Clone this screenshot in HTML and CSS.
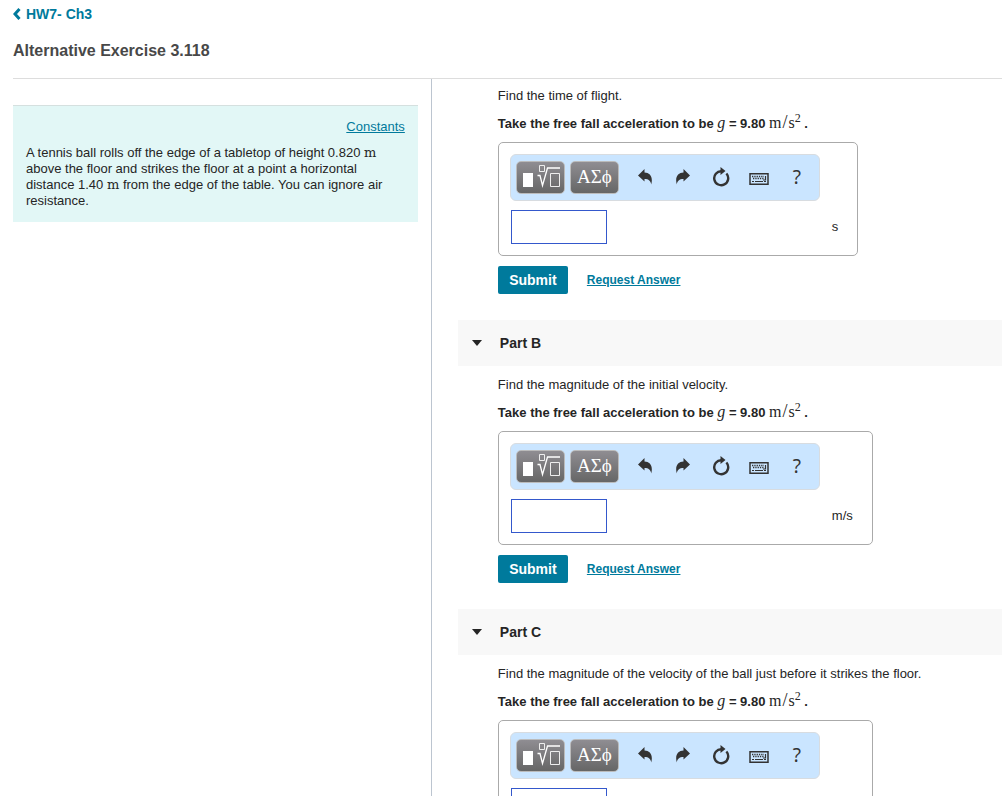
FILE: index.html
```html
<!DOCTYPE html>
<html lang="en">
<head>
    <meta charset="UTF-8">
    <meta name="viewport" content="width=device-width, initial-scale=1.0">
    <title>Alternative Exercise 3.118</title>
    <link rel="stylesheet" href="styles.css">
</head>
<body>
    <!-- icons shared by the three toolbars -->
    <svg class="sprite" aria-hidden="true">
        <symbol id="icon-template" viewBox="0 0 40 26">
            <path d="M3 9h10v14H3z" fill="#fff"/>
            <path d="M19.500 1.500h5v6h-5zM30.500 9.500h9v13h-9z" fill="none" stroke="#eee"/>
            <path d="M17.500 11.500h2.500l2.500 10 5-17.500H40" fill="none" stroke="#fff" stroke-width="1.300"/>
        </symbol>
        <symbol id="icon-undo" viewBox="0 0 16 16">
            <path d="M1 6.500L7.500 0v3.500c5.500.2 8.800 4.500 6.700 12-.4-3.500-2.500-5.500-6.700-5.500v2.500z"/>
        </symbol>
        <symbol id="icon-redo" viewBox="0 0 16 16">
            <path d="M15 6.500L8.500 0v3.500C3 3.700-.3 8 1.800 15.500c.4-3.500 2.500-5.500 6.700-5.500v2.500z"/>
        </symbol>
        <symbol id="icon-reset" viewBox="0 0 18 20">
            <path d="M9.500 4.200A7 7 0 1 0 14.400 6.500" fill="none" stroke="#333" stroke-width="2.400"/>
            <path d="M8.500 0l5 4-5 4z"/>
        </symbol>
        <symbol id="icon-keyboard" viewBox="0 0 20 12">
            <path d="M1 .8h18v10.400H1z" fill="none" stroke="#333" stroke-width="1.500"/>
            <path d="M3 3.500h12M4 5.500h11" fill="none" stroke="#333" stroke-width="1.300" stroke-dasharray="1.300 1"/>
            <path d="M3 8.500h2M6 8.500h8M15 8.500h2M16.500 3v4H14" fill="none" stroke="#333" stroke-width="1.200"/>
        </symbol>
    </svg>

    <header class="header">
        <a class="back" href="#">
            <svg class="back-icon" viewBox="0 0 8 12" aria-hidden="true"><path d="M6.500 1L2 6l4.500 5"/></svg>HW7- Ch3
        </a>
        <h1>Alternative Exercise 3.118</h1>
    </header>

    <div class="panes">
        <aside class="problem">
            <div class="problem-card">
                <a class="constants" href="#">Constants</a>
                <p>A tennis ball rolls off the edge of a tabletop of height 0.820 <span class="math">m</span> above the floor and strikes the floor at a point a horizontal distance 1.40 <span class="math">m</span> from the edge of the table. You can ignore air resistance.</p>
            </div>
        </aside>

        <main class="parts">
            <section class="part">
                <div class="part-body">
                    <p>Find the time of flight.</p>
                    <p class="note">Take the free fall acceleration to be <i class="math">g</i> = 9.80 <span class="math units">m<span class="slash">/</span>s<sup>2</sup></span> .</p>
                    <div class="answer">
                        <div class="toolbar">
                            <button class="key" type="button" aria-label="Templates"><svg class="template"><use href="#icon-template"/></svg></button>
                            <button class="key" type="button">ΑΣϕ</button>
                            <div class="tools">
                                <button class="tool" type="button" aria-label="Undo"><svg class="arrow"><use href="#icon-undo"/></svg></button>
                                <button class="tool" type="button" aria-label="Redo"><svg class="arrow"><use href="#icon-redo"/></svg></button>
                                <button class="tool" type="button" aria-label="Reset"><svg class="reset"><use href="#icon-reset"/></svg></button>
                                <button class="tool" type="button" aria-label="Keyboard shortcuts"><svg class="keyboard"><use href="#icon-keyboard"/></svg></button>
                                <button class="tool" type="button">?</button>
                            </div>
                        </div>
                        <div class="entry">
                            <input id="answer-a" type="text" aria-label="Time of flight">
                            <label for="answer-a">s</label>
                        </div>
                    </div>
                    <div class="actions">
                        <button class="submit" type="button">Submit</button>
                        <a href="#">Request Answer</a>
                    </div>
                </div>
            </section>

            <section class="part">
                <h2><button class="part-toggle" type="button">Part B</button></h2>
                <div class="part-body">
                    <p>Find the magnitude of the initial velocity.</p>
                    <p class="note">Take the free fall acceleration to be <i class="math">g</i> = 9.80 <span class="math units">m<span class="slash">/</span>s<sup>2</sup></span> .</p>
                    <div class="answer">
                        <div class="toolbar">
                            <button class="key" type="button" aria-label="Templates"><svg class="template"><use href="#icon-template"/></svg></button>
                            <button class="key" type="button">ΑΣϕ</button>
                            <div class="tools">
                                <button class="tool" type="button" aria-label="Undo"><svg class="arrow"><use href="#icon-undo"/></svg></button>
                                <button class="tool" type="button" aria-label="Redo"><svg class="arrow"><use href="#icon-redo"/></svg></button>
                                <button class="tool" type="button" aria-label="Reset"><svg class="reset"><use href="#icon-reset"/></svg></button>
                                <button class="tool" type="button" aria-label="Keyboard shortcuts"><svg class="keyboard"><use href="#icon-keyboard"/></svg></button>
                                <button class="tool" type="button">?</button>
                            </div>
                        </div>
                        <div class="entry">
                            <input id="answer-b" type="text" aria-label="Initial velocity">
                            <label for="answer-b">m/s</label>
                        </div>
                    </div>
                    <div class="actions">
                        <button class="submit" type="button">Submit</button>
                        <a href="#">Request Answer</a>
                    </div>
                </div>
            </section>

            <section class="part">
                <h2><button class="part-toggle" type="button">Part C</button></h2>
                <div class="part-body">
                    <p>Find the magnitude of the velocity of the ball just before it strikes the floor.</p>
                    <p class="note">Take the free fall acceleration to be <i class="math">g</i> = 9.80 <span class="math units">m<span class="slash">/</span>s<sup>2</sup></span> .</p>
                    <div class="answer">
                        <div class="toolbar">
                            <button class="key" type="button" aria-label="Templates"><svg class="template"><use href="#icon-template"/></svg></button>
                            <button class="key" type="button">ΑΣϕ</button>
                            <div class="tools">
                                <button class="tool" type="button" aria-label="Undo"><svg class="arrow"><use href="#icon-undo"/></svg></button>
                                <button class="tool" type="button" aria-label="Redo"><svg class="arrow"><use href="#icon-redo"/></svg></button>
                                <button class="tool" type="button" aria-label="Reset"><svg class="reset"><use href="#icon-reset"/></svg></button>
                                <button class="tool" type="button" aria-label="Keyboard shortcuts"><svg class="keyboard"><use href="#icon-keyboard"/></svg></button>
                                <button class="tool" type="button">?</button>
                            </div>
                        </div>
                        <div class="entry">
                            <input id="answer-c" type="text" aria-label="Final velocity">
                            <label for="answer-c">m/s</label>
                        </div>
                    </div>
                </div>
            </section>
        </main>
    </div>
</body>
</html>
```

FILE: styles.css
```css
* {
    box-sizing: border-box;
}
body {
    display: flex;
    flex-direction: column;
    height: 100vh;
    margin: 0;
    font: 13px/16px "Liberation Sans", Arial, sans-serif;
    color: #252525;
    background: white;
}
h1, h2, p {
    margin: 0;
}
a {
    color: #007a9c;
}
button {
    padding: 0;
    border: none;
    font-family: inherit;
    cursor: pointer;
}
.sprite {
    display: none;
}

/* Header */
.header {
    margin-left: 13px;
    padding: 6px 0 17px;
    border-bottom: 1px solid #ddd;
}
.back {
    display: inline-flex;
    align-items: center;
    gap: 5px;
    font-size: 14px;
    font-weight: bold;
    text-decoration: none;
}
.back-icon {
    width: 8px;
    height: 12px;
    fill: none;
    stroke: #007a9c;
    stroke-width: 3;
}
.header h1 {
    margin-top: 17px;
    font-size: 16px;
    line-height: 20px;
    color: #484848;
}

/* Two panes */
.panes {
    display: flex;
    flex: 1;
    min-height: 0;
}
.problem {
    width: 43%;
    padding: 26px 13px;
}
.problem-card {
    padding: 13px;
    border-top: 1px solid #d5e0df;
    background: #e2f7f6;
}
.constants {
    display: block;
    width: fit-content;
    margin: 0 0 10px auto;
}
.parts {
    flex: 1;
    padding-left: 26px;
    border-left: 1px solid #bcc5d0;
    overflow-y: auto;
    scrollbar-width: none;
}

/* Parts */
.part h2 {
    background: #f8f8f8;
}
.part-toggle {
    display: flex;
    align-items: center;
    gap: 18px;
    width: 100%;
    height: 46px;
    padding-left: 14px;
    background: none;
    font-size: 14px;
    font-weight: bold;
    color: #252525;
}
.part-toggle::before {
    content: "";
    border: 5px solid transparent;
    border-top: 6px solid #252525;
    border-bottom: none;
}
.part-body {
    padding: 11px 0 26px 40px;
}
.part:first-child .part-body {
    padding-top: 9px;
}
.note {
    margin: 11px 0 10px;
    font-weight: bold;
    line-height: 17px;
}
.math {
    font-family: "DejaVu Serif", serif;
    font-size: 13px;
    font-weight: normal;
    line-height: 14px;
}
.note .math {
    font-family: "Liberation Serif", serif;
    font-size: 16px;
}
.slash {
    margin: 0 1px;
    font-size: 18px;
}
.units sup {
    font-size: 12px;
    line-height: 1px;
}

/* Answer box */
.answer {
    width: fit-content;
    padding: 11px 19px 11px 11px;
    border: 1px solid #aaa;
    border-radius: 5px;
}
.toolbar {
    display: flex;
    align-items: center;
    gap: 5px;
    width: 310px;
    height: 47px;
    padding-left: 5px;
    border: 1px solid #d8dce0;
    border-radius: 6px;
    background: #cae5ff;
}
.key {
    display: flex;
    align-items: center;
    justify-content: center;
    width: 49px;
    height: 33px;
    padding-bottom: 2px;
    border: 1px solid #bbb;
    border-radius: 5px;
    background: linear-gradient(#8f8d92, #666);
    font: 19px "Liberation Serif", serif;
    color: white;
}
.template {
    width: 40px;
    height: 26px;
}
.tools {
    display: flex;
    margin-left: 2px;
}
.tool {
    display: flex;
    align-items: center;
    justify-content: center;
    width: 38px;
    height: 33px;
    padding-bottom: 2px;
    background: none;
    font-family: "Noto Sans", sans-serif;
    font-size: 19px;
    color: #333;
    fill: #333;
}
.arrow {
    width: 16px;
    height: 16px;
}
.reset {
    width: 18px;
    height: 20px;
}
.keyboard {
    width: 20px;
    height: 12px;
    margin-top: 5px;
}
.entry {
    display: flex;
    align-items: center;
    margin: 9px 0 0 1px;
}
.entry input {
    width: 96px;
    height: 34px;
    margin-right: 225px;
    border: 1px solid #3458cc;
    font: inherit;
}
.actions {
    display: flex;
    align-items: center;
    gap: 19px;
    margin-top: 10px;
    font-size: 12px;
    font-weight: bold;
}
.submit {
    width: 70px;
    height: 28px;
    border-radius: 2px;
    background: #007a9c;
    font-size: 14px;
    font-weight: bold;
    color: white;
}
```
